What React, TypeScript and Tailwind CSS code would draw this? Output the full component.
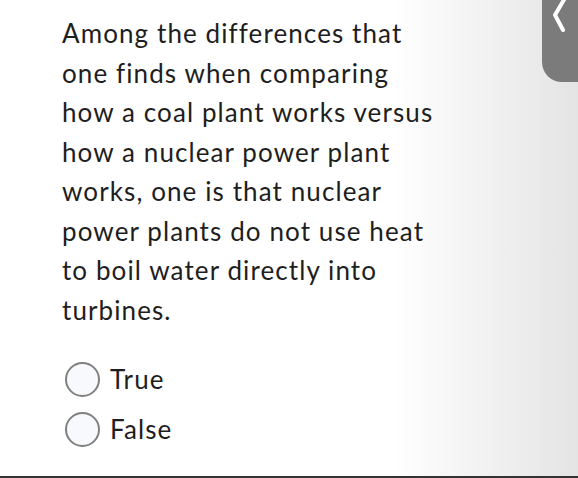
const lines = [
  "Among the differences that",
  "one finds when comparing",
  "how a coal plant works versus",
  "how a nuclear power plant",
  "works, one is that nuclear",
  "power plants do not use heat",
  "to boil water directly into",
  "turbines.",
];

export default function App() {
  return (
    <div
      className="relative h-[478px] w-[578px] overflow-hidden bg-gradient-to-r from-white via-white via-[68%] to-[#e4e4e4]"
      style={{ fontFamily: "Lato, 'Open Sans', sans-serif" }}
    >
      <div className="absolute right-0 top-0 h-[82px] w-[36px] rounded-bl-[20px] bg-[#7b7b7b]">
        <svg className="absolute left-[8px] top-[-4px]" width="20" height="40" viewBox="0 0 20 40">
          <path d="M15 2 L5 19 L13 34" fill="none" stroke="#ffffff" strokeWidth="4" strokeLinecap="round" strokeLinejoin="round" />
        </svg>
      </div>
      <div className="pl-[62px] pt-[14px]">
        <p className="text-[26px] leading-[39.5px] tracking-[1.1px] text-[#1e1e1e] [font-variant-ligatures:none]">
          {lines.map((l) => (
            <span key={l} className="block whitespace-nowrap">{l}</span>
          ))}
        </p>
        <div className="mt-[32px] flex flex-col gap-[15px] pl-[3px]">
          {["True", "False"].map((label) => (
            <div key={label} className="flex items-center gap-[10px]">
              <span className="h-[35px] w-[35px] rounded-full border-2 border-[#808080] bg-[#f8f9fc]" />
              <span className="text-[26px] leading-[35px] tracking-[1.1px] text-[#1e1e1e]">{label}</span>
            </div>
          ))}
        </div>
      </div>
      <div className="absolute bottom-0 left-0 h-[2px] w-full bg-[#333]" />
    </div>
  );
}
